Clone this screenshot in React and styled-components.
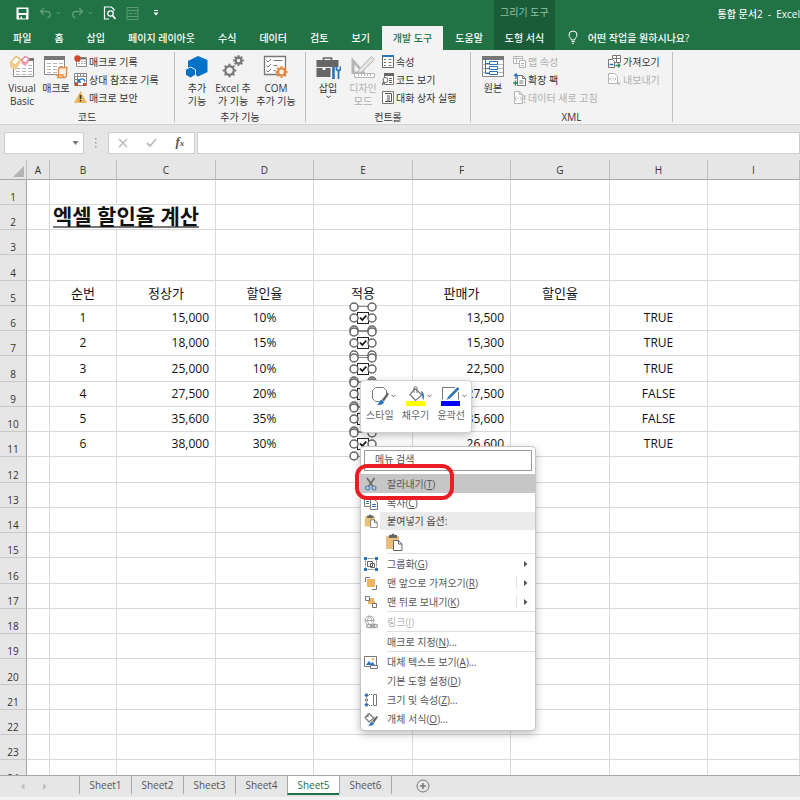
import { useState } from 'react';
import styled, { createGlobalStyle } from 'styled-components';

const GlobalStyle = createGlobalStyle`
  * {
    box-sizing: border-box;
  }
  body {
    margin: 0;
    font-family: 'Open Sans', 'Noto Sans CJK KR', sans-serif;
    font-size: 10px;
    color: #333;
  }
  button,
  input {
    font: inherit;
    color: inherit;
    padding: 0;
    border: none;
    background: none;
  }
  svg {
    display: block;
    flex: none;
  }
`;

const AppWrap = styled.div`
  display: flex;
  flex-direction: column;
  height: 100vh;
  overflow: hidden;
  background-color: #e6e6e6;
`;

/* ---------- header ---------- */

const Header = styled.header`
  display: flex;
  height: 50px;
  color: #fff;
  background-color: #217346;
`;

const HeaderColumn = styled.div`
  display: flex;
  flex: ${({ $grow }) => ($grow ? '1 1 0' : 'none')};
  flex-direction: column;
  min-width: 0;
`;

const QuickBar = styled.div`
  display: flex;
  align-items: center;
  height: 26px;
  padding-left: 16px;
`;

const QuickBtn = styled.button`
  display: flex;
  align-items: center;
  gap: 4px;
  margin-right: ${({ $gap }) => $gap || 10}px;
  color: ${({ $dim }) => ($dim ? '#5b9a78' : '#fff')};
`;

const TabList = styled.nav`
  display: flex;
  gap: 1px;
  height: 24px;
  padding-left: 2px;
`;

const RibbonTab = styled.button`
  height: 24px;
  padding: 0 11px;
  line-height: 22px;
  white-space: nowrap;
  font-weight: 500;
  color: ${({ $active }) => ($active ? '#217346' : '#fff')};
  background-color: ${({ $active }) => ($active ? '#f3f3f3' : 'transparent')};
`;

const ContextGroup = styled.div`
  flex: none;
  width: 61px;
  text-align: center;
  background-color: #1b5c38;
`;

const ContextTitle = styled.p`
  height: 26px;
  margin: 0;
  line-height: 24px;
  color: #8fc4a5;
`;

const DocTitle = styled.h1`
  height: 26px;
  margin: 0 0 0 auto;
  font-size: 10px;
  font-weight: 500;
  line-height: 28px;
  white-space: pre;
`;

const TellMe = styled.button`
  display: flex;
  align-items: center;
  gap: 8px;
  height: 24px;
  padding: 0 0 2px 11px;
  font-weight: 500;
  white-space: nowrap;
`;

/* ---------- ribbon ---------- */

const Ribbon = styled.div`
  display: flex;
  flex: none;
  height: 75px;
  padding-top: 2px;
  overflow: hidden;
  background-color: #f3f3f3;
  border-bottom: 1px solid #d2d2d2;
`;

const Group = styled.section`
  display: flex;
  flex: none;
  flex-direction: column;
  width: ${({ $width }) => $width}px;
  height: 70px;
  border-right: 1px solid #c0c0c0;
`;

const GroupBody = styled.div`
  display: flex;
  flex: none;
  height: 57px;
  padding-left: 4px;
`;

const GroupLabel = styled.p`
  margin: 0;
  line-height: 16px;
  text-align: center;
`;

const BigBtn = styled.button`
  display: flex;
  flex: none;
  flex-direction: column;
  align-items: center;
  width: ${({ $width }) => $width}px;
  padding-top: 3px;
  line-height: 13px;
  white-space: nowrap;
  color: ${({ $dim }) => ($dim ? '#b0b0b0' : '#333')};
`;

const BigText = styled.span`
  display: flex;
  flex-direction: column;
  margin-top: 1px;
`;

const SmallList = styled.div`
  display: flex;
  flex: none;
  flex-direction: column;
  width: ${({ $width }) => $width || 92}px;
  padding-left: 2px;
`;

const SmallBtn = styled.button`
  display: flex;
  align-items: center;
  gap: 2px;
  height: 18px;
  white-space: nowrap;
  color: ${({ $dim }) => ($dim ? '#b0b0b0' : '#333')};
`;

/* ---------- formula bar ---------- */

const FormulaBar = styled.div`
  display: flex;
  flex: none;
  align-items: center;
  height: 35px;
  padding: 0 0 0 4px;
`;

const NameBox = styled.label`
  display: flex;
  align-items: center;
  width: 80px;
  height: 22px;
  padding-right: 4px;
  background-color: #fff;
  border: 1px solid #cdcdcd;
`;

const NameInput = styled.input`
  flex: 1;
  min-width: 0;
  padding-left: 4px;
  outline: none;
`;

const DotHandle = styled.span`
  display: flex;
  justify-content: center;
  width: 24px;
`;

const FxBox = styled.div`
  display: flex;
  align-items: center;
  justify-content: space-around;
  width: 87px;
  height: 22px;
  margin-right: 2px;
  background-color: #fff;
  border: 1px solid #cdcdcd;
`;

const FxBtn = styled.button`
  width: 20px;
  display: flex;
  justify-content: center;
`;

const FxText = styled.span`
  font-family: 'Liberation Serif', serif;
  font-size: 13px;
  font-style: italic;
  font-weight: 700;
  line-height: 14px;
  color: #555;

  small {
    font-size: 9px;
  }
`;

const FormulaInput = styled.input`
  flex: 1;
  min-width: 0;
  height: 22px;
  padding: 0 6px;
  background-color: #fff;
  border: 1px solid #cdcdcd;
  outline: none;
`;

/* ---------- sheet ---------- */

const SheetArea = styled.main`
  position: relative;
  flex: 1;
  min-height: 0;
  overflow: hidden;
  background-color: #fff;
`;

const Grid = styled.table`
  width: 100%;
  min-width: 760px;
  table-layout: fixed;
  border-collapse: separate;
  border-spacing: 0;
  font-size: 12px;
  color: #111;

  th,
  td {
    padding: 0;
    font-weight: 400;
    line-height: 14px;
    white-space: nowrap;
  }
  tbody tr {
    height: 25px;
  }
  tbody tr:nth-child(4n) {
    height: 26px;
  }
`;

const ColHead = styled.th`
  height: 20px;
  font-size: 10px;
  color: #333;
  background-color: #e6e6e6;
  border-right: 1px solid #bdbdbd;
  border-bottom: 1px solid #a6a6a6;
`;

const Corner = styled(ColHead)`
  svg {
    margin: 3px 2px 0 auto;
  }
`;

const RowHead = styled.th`
  font-size: 10px;
  color: #333;
  vertical-align: bottom;
  background-color: #e6e6e6;
  border-right: 1px solid #a6a6a6;
  border-bottom: 1px solid #c8c8c8;
`;

const Cell = styled.td`
  text-align: ${({ $align }) => $align || 'center'};
  vertical-align: middle;
  border-right: 1px solid #d9d9d9;
  border-bottom: 1px solid #d9d9d9;

  && {
    padding-right: ${({ $align }) => ($align === 'right' ? '6px' : '0')};
    font-size: ${({ $head }) => ($head ? '13px' : '12px')};
  }
`;

const TitleCell = styled(Cell)`
  && {
    padding-left: 3px;
    font-size: 21px;
    font-weight: 700;
    line-height: 20px;
    text-align: left;
  }
`;

const TitleText = styled.span`
  display: inline-block;
  height: 22px;
  border-bottom: 2px solid #777;
`;

const CheckWrap = styled.span`
  position: relative;
  display: block;
  width: 12px;
  height: 12px;
  margin: 0 auto;
`;

const CheckInput = styled.input`
  display: block;
  width: 12px;
  height: 12px;
  margin: 0;
  appearance: none;
  background-color: #fff;
  border: 1px solid #222;
`;

const Handles = styled.svg`
  position: absolute;
  top: -10px;
  left: -8px;
  pointer-events: none;
`;

/* ---------- popups over the sheet ---------- */

const MiniToolbar = styled.div`
  position: absolute;
  top: 220px;
  left: 360px;
  display: flex;
  justify-content: space-around;
  width: 112px;
  height: 53px;
  padding: 5px 2px 0 1px;
  background-color: #fff;
  border: 1px solid #d0d0d0;
  border-radius: 4px;
  box-shadow: 0 3px 8px rgba(0, 0, 0, 0.25);
`;

const MiniBtn = styled.button`
  display: flex;
  flex-direction: column;
  align-items: center;
  width: 36px;
  line-height: 14px;
  white-space: nowrap;
  color: #666;
`;

const MiniIcon = styled.span`
  display: flex;
  align-items: center;
  gap: 1px;
  margin-bottom: 2px;
  padding-left: 6px;
`;

const Menu = styled.div`
  position: absolute;
  top: 286px;
  left: 360px;
  width: 176px;
  padding: 3px 0 2px;
  color: #555;
  background-color: #fff;
  border: 1px solid #c6c6c6;
  border-radius: 4px;
  box-shadow: 0 3px 8px rgba(0, 0, 0, 0.25);
`;

const MenuSearch = styled.input`
  display: block;
  width: calc(100% - 6px);
  height: 21px;
  margin: 0 3px 3px;
  padding: 0 0 4px 10px;
  border: 1px solid #999;
  outline: none;

  &::placeholder {
    color: #555;
    opacity: 1;
  }
`;

const MenuItem = styled.button`
  display: flex;
  align-items: center;
  width: 100%;
  height: 19px;
  padding: 0 7px 0 3px;
  text-align: left;
  white-space: nowrap;
  color: ${({ $dim }) => ($dim ? '#b5b5b5' : '#555')};
  background-color: ${({ $active }) => ($active ? '#c6c6c6' : 'transparent')};
`;

const MenuIcon = styled.span`
  width: 14px;
  margin-right: 9px;
`;

const MenuText = styled.span`
  flex: 1;
`;

const SubArrow = styled.span`
  display: flex;
  align-items: center;
  justify-content: flex-end;
  width: 12px;
  height: 13px;
  border-left: 1px solid ${({ $split }) => ($split ? '#e3e3e3' : 'transparent')};
`;

const PasteHead = styled.div`
  display: flex;
  align-items: center;
  height: 18px;
  padding-left: 3px;
`;

const PasteLabel = styled.span`
  flex: 1;
  margin-left: 2px;
  padding-left: 7px;
  line-height: 18px;
  color: #444;
  background-color: #ebebeb;
`;

const PasteBtn = styled.button`
  display: block;
  height: 23px;
  padding: 0 0 0 24px;
`;

const MenuLine = styled.hr`
  height: 1px;
  margin: 0 0 0 26px;
  border: none;
  background-color: #dedede;
`;

const RedMark = styled.div`
  position: absolute;
  top: 304px;
  left: 355px;
  width: 99px;
  height: 36px;
  border: 4px solid #ec1c24;
  border-radius: 12px;
  pointer-events: none;
`;

/* ---------- sheet tabs ---------- */

const SheetBar = styled.footer`
  display: flex;
  flex: none;
  height: 25px;
  padding-left: 20px;
  border-top: 1px solid #a6a6a6;
  border-bottom: 3px solid #f3f3f3;
`;

const NavBtn = styled.button`
  display: flex;
  align-items: center;
  width: 22px;
  height: 20px;
`;

const SheetTabs = styled.div`
  display: flex;
  margin-left: 15px;
`;

const SheetTab = styled.button`
  width: 52px;
  height: 19px;
  line-height: 18px;
  color: ${({ $active }) => ($active ? '#217346' : '#555')};
  background-color: ${({ $active }) => ($active ? '#fff' : 'transparent')};
  border-left: 1px solid #a6a6a6;
  border-bottom: 2px solid ${({ $active }) => ($active ? '#217346' : 'transparent')};

  &:last-child {
    width: 53px;
    border-right: 1px solid #a6a6a6;
  }
`;

const AddSheetBtn = styled.button`
  height: 20px;
  margin-left: 24px;
`;

/* ---------- icons ---------- */

const Chevron = ({ color = 'currentColor' }) => (
  <svg width="5" height="4" viewBox="0 0 5 4" fill="none" stroke={color}>
    <path d="M0.5 0.8 2.5 2.8 4.5 0.8" />
  </svg>
);

const SaveIcon = () => (
  <svg width="13" height="13" viewBox="0 0 13 13">
    <path fill="#fff" fillRule="evenodd" d="M.5.500h12v12H.5zM2.500 2v4h8V2zM3 8v3.500h1.500V9.500h1.500v2h4V8z" />
  </svg>
);

const UndoIcon = ({ flip }) => (
  <svg width="13" height="12" viewBox="0 0 13 12" fill="none" stroke="currentColor" strokeWidth="1.4">
    <g transform={flip ? 'translate(13 0) scale(-1 1)' : undefined}>
      <path d="M5 1 1.500 4.500 5 8M1.500 4.500H8c4 0 4.500 5 .5 6.500" />
    </g>
  </svg>
);

const PreviewIcon = () => (
  <svg width="13" height="14" viewBox="0 0 13 14" fill="none" stroke="#fff" strokeWidth="1.200">
    <path d="M11 5V3.500L8.500 1H1.500v12H6" />
    <circle cx="7.500" cy="7.500" r="2.700" />
    <path d="m9.500 9.500 3 3.500" strokeWidth="1.800" />
  </svg>
);

const FormIcon = () => (
  <svg width="13" height="13" viewBox="0 0 13 13" fill="none" stroke="currentColor">
    <path d="M1 .5h11v12H1zM1 3.500h11M1 9.500h11M3 6.500h3M7.500 6.500h3" />
  </svg>
);

const CustomizeIcon = () => (
  <svg width="6" height="6" viewBox="0 0 6 6">
    <path fill="#fff" d="M1 0h4v1H1zM0.500 2.500h5L3 5.500z" />
  </svg>
);

const BulbIcon = () => (
  <svg width="14" height="14" viewBox="0 0 14 14" fill="none" stroke="#fff">
    <path d="M5.300 10c0-2-2.300-2.600-2.300-5a4 4 0 0 1 8 0c0 2.400-2.300 3-2.300 5zM5.300 11.500h3.400M6 13.200h2" />
  </svg>
);

const VbIcon = () => (
  <svg width="26" height="26" viewBox="0 0 26 26">
    <path fill="#fff" stroke="#8a8a8a" d="M4.500 4.500h20v17h-20z" />
    <path fill="#777" d="M17 3h8v3h-8z" />
    <path stroke="#b5b5b5" fill="none" d="M7 13.500h4M13 13.500h4M19 13.500h4M7 16.500h4M13 16.500h4M19 16.500h4M7 19.500h4M13 19.500h4M19 19.500h4M19 10.500h4" />
    <path fill="#fff" stroke="#e8c070" strokeWidth="1.500" d="m1.500 7.500 5.500-6L11.500 4 6.500 10.500z" />
    <path fill="#f0cd90" d="m1 7.500 5.500 3V15L1 12zM6.500 10.500l5-6.500v4l-5 7z" />
    <path fill="#fff" stroke="#e5829c" strokeWidth="1.200" d="m12.500 5.500 3.500-4 4 2-3.500 4.500z" />
    <path fill="#ef9ab0" d="m12.500 5.500 4 2.500v3l-4-2.500zM16.500 8 20 3.500v3L16.500 11z" />
  </svg>
);

const MacroIcon = () => (
  <svg width="26" height="26" viewBox="0 0 26 26">
    <path fill="#fff" stroke="#8a8a8a" d="M1.500 2.500h20v17h-20z" />
    <path fill="#777" d="M1 1h21v4H1z" />
    <path stroke="#b5b5b5" fill="none" d="M4 8.500h4M10 8.500h4M16 8.500h4M4 11.500h4M10 11.500h4M16 11.500h4M4 14.500h4M10 14.500h4M4 17.500h4M10 17.500h4" />
    <path fill="#fdf1e6" stroke="#e8893c" strokeWidth="1.300" d="M17 12.500h7.500c-1 .5-1 1.500-1 2.500v5c0 2-1 2.500-2 2.500h-7.500c1 0 1.500-.5 1.500-2.500v-5c0-1.500.5-2.500 1.500-2.500zM13 20h7c0 2 .5 2.500 1.500 2.500" />
  </svg>
);

const AddInIcon = () => (
  <svg width="26" height="26" viewBox="0 0 26 26">
    <path fill="#0072c6" d="m14 1 9.500 4v12L14 21.500 10 19v-4l-6-2V6z" />
    <path fill="#0072c6" stroke="#f3f3f3" d="m6.500 12 5 2.500V20l-5 3-5-3v-5.500z" />
  </svg>
);

const Gear = ({ cx, cy, r, color, fill = 'none' }) => (
  <g fill={fill} stroke={color} transform={`translate(${cx} ${cy})`}>
    <circle r={r} strokeWidth="2.200" />
    {[0, 45, 90, 135, 180, 225, 270, 315].map((deg) => (
      <path key={deg} strokeWidth="2" d={`M0 ${-r - 0.5}v-2`} transform={`rotate(${deg})`} />
    ))}
  </g>
);

const GearsIcon = () => (
  <svg width="26" height="26" viewBox="0 0 26 26">
    <Gear cx={9.5} cy={15.5} r={4.3} color="#777" />
    <Gear cx={18.5} cy={5.500} r={2.8} color="#777" />
  </svg>
);

const ComIcon = () => (
  <svg width="26" height="26" viewBox="0 0 26 26">
    <path fill="#fff" stroke="#777" strokeWidth="1.300" d="M1.500 1.500h21v18h-21z" />
    <path fill="none" stroke="#777" d="m3.500 5.500 1.500 1.500L8 4M3.500 10.500 5 12l3-3M3.500 15.500 5 17l3-3M10.500 5.500h9M10.500 10.500h4M10.500 15.500h2" />
    <Gear cx={18.500} cy={17} r={3.500} color="#e8893c" fill="#f3f3f3" />
  </svg>
);

const ToolboxIcon = () => (
  <svg width="26" height="26" viewBox="0 0 26 26">
    <path fill="none" stroke="#666" strokeWidth="1.600" d="M8.500 5.500V3h8v2.500" />
    <path fill="#666" d="M1.500 5h22v7h-22zM1.500 13h6v2h3v-2h5v9h-14z" />
    <path stroke="#2b74b8" strokeWidth="2.600" d="M18.500 12v12" />
    <path fill="none" stroke="#2b74b8" strokeWidth="1.800" d="M21.500 11.500v3l2 1.500 2-1.500v-3M23.500 16v8" />
  </svg>
);

const DesignIcon = () => (
  <svg width="26" height="26" viewBox="0 0 26 26">
    <path fill="#b5b5b5" fillRule="evenodd" d="M1.500 2v17h15zM4.500 9.500l7 7h-7z" />
    <path fill="#e3e3e3" stroke="#b5b5b5" d="M21.500 1.500 24.500 4.500 12 17l-4 1.500 1-4z" />
    <path fill="#fff" stroke="#b5b5b5" d="M4.500 18.500h20v4h-20zM8.500 19v2M11.500 19v2M14.500 19v2M17.500 19v2M20.500 19v2" />
  </svg>
);

const SourceIcon = () => (
  <svg width="26" height="26" viewBox="0 0 26 26">
    <path fill="#fff" stroke="#888" d="M2.500 3.500h21v18h-21z" />
    <path fill="#777" d="M2 1h22v4H2z" />
    <path fill="none" stroke="#bbb" d="M3 9.500h20M3 13.500h20M3 17.500h20" />
    <path fill="none" stroke="#2b74b8" d="M5.500 3v15.500h4M5.500 13.500h4M5.500 8.500h4" />
    <path fill="#fff" stroke="#2b74b8" d="M9.500 6.500h8v3h-8zM9.500 11.500h8v3h-8zM9.500 16.500h8v3h-8z" />
  </svg>
);

const RecordIcon = () => (
  <svg width="13" height="13" viewBox="0 0 13 13">
    <path fill="#fff" stroke="#8a8a8a" d="M2.500 2.500h10v9h-10z" />
    <path stroke="#777" d="M5 3.500h7" strokeWidth="2" />
    <path stroke="#a8a8a8" d="M4 6.500h2M7 6.500h2M10 6.500h2M4 8.500h2M7 8.500h2M10 8.500h2" />
    <circle cx="3.500" cy="3.500" r="3.200" fill="#d2492a" />
  </svg>
);

const RelativeIcon = () => (
  <svg width="13" height="13" viewBox="0 0 13 13">
    <path fill="#fff" stroke="#888" d="M.5.500h12v12H.5zM.5 3.500h12M3.500.500v12M6.500.500v3M9.500.500v3M.5 6.500h3M.5 9.500h3" />
    <path fill="none" stroke="#2b74b8" strokeWidth="1.400" d="M5 8.500c1-3.500 5-3.500 6 0M4.500 6v3H7" />
    <path fill="#d2492a" d="M1 10h3v3H1zM9 10h3v3H9z" />
  </svg>
);

const WarnIcon = () => (
  <svg width="13" height="12" viewBox="0 0 13 12">
    <path fill="#e9b860" d="M6.500 0 13 12H0z" />
    <path stroke="#333" strokeWidth="1.600" d="M6.500 4v4M6.500 9v1.600" />
  </svg>
);

const PropIcon = () => (
  <svg width="12" height="13" viewBox="0 0 12 13">
    <path fill="#fff" stroke="#666" d="M.5.500h11v12H.5z" />
    <path fill="#2b74b8" d="M0 0h12v2H0z" />
    <path stroke="#777" d="M2 4.500h2M6.500 4.500h3M2 7.500h2M6.500 7.500h3M2 10.500h2M6.500 10.500h3" />
  </svg>
);

const CodeIcon = () => (
  <svg width="12" height="13" viewBox="0 0 12 13">
    <path fill="#fff" stroke="#777" d="M2.500 1.500h9v10h-9z" />
    <path fill="#666" d="M2 0h10v3H2zM7 5h3v1H7zM7 7h3v1H7zM7 9h3v1H7z" />
    <circle cx="3.500" cy="7" r="2.500" fill="#fff" stroke="#666" />
    <path stroke="#666" strokeWidth="1.500" d="m2 9-2 3" />
  </svg>
);

const DialogIcon = () => (
  <svg width="12" height="13" viewBox="0 0 12 13">
    <path fill="#fff" stroke="#777" d="M.5.500h11v12H.5z" />
    <path fill="none" stroke="#555" d="M3 2.500h6.500v8H3M5 5h3M5 7h3M4.500 9h3.500" />
  </svg>
);

const MapIcon = ({ color = '#b5b5b5' }) => (
  <svg width="13" height="13" viewBox="0 0 13 13" fill="#fff" stroke={color}>
    <path d="M.5 1.500h9v7h-9zM.5 3.500h9M3.500 1.500v7" />
    <path d="M6.500 5.500h6v7h-6zM8 8.500h3M8 10.500h3" />
  </svg>
);

const PackIcon = () => (
  <svg width="13" height="13" viewBox="0 0 13 13" fill="none" stroke="#777">
    <path fill="#fff" d="M4.500 2.500h5l3 3v7h-8zM9.500 2.500v3h3M6.500 8h4M6.500 10h4" />
    <path stroke="#2b74b8" strokeWidth="1.300" d="M3 6V1M1 3l2-2 2 2" />
    <path stroke="#2f8f63" strokeWidth="1.400" d="M2.500 7.500v5M0 10h5" />
  </svg>
);

const XmlIcon = () => (
  <svg width="13" height="13" viewBox="0 0 13 13" fill="#fff" stroke="#b5b5b5">
    <path d="M1.500.500h5l3 3v9h-8zM6.500.500v3h3M3.500 5.500 2 7.500l1.500 2M7 5.500l1.500 2L7 9.500M4.500 7.500h1.500" />
    <path strokeWidth="1.500" d="M11.500 4v5M11.500 10.500v1.500" />
  </svg>
);

const ImportIcon = () => (
  <svg width="13" height="13" viewBox="0 0 13 13" fill="#fff" stroke="#777">
    <path d="M4.500.500h8v7h-8zM4.500 3.500h8M8.500.500v7" />
    <path d="M.5 4.500h4l2 2v6h-6z" />
    <path stroke="#2b74b8" d="M1.500 9.500h4" strokeWidth="1.500" />
    <path stroke="#2f8f63" strokeWidth="1.300" fill="none" d="M7.500 10.500h4M10 8.500l2 2-2 2" />
  </svg>
);

const ExportIcon = () => (
  <svg width="13" height="13" viewBox="0 0 13 13" fill="#fff" stroke="#b5b5b5">
    <path d="M.5.500h6l3 3v7h-9zM3 4.500 1.500 6 3 7.500M6.500 4.500 8 6 6.500 7.500M4 6h1.500" />
    <path d="M6.500 10.500h5M10 8.500l2 2-2 2" />
  </svg>
);

const StyleIcon = () => (
  <svg width="20" height="20" viewBox="0 0 20 20">
    <path fill="#fff" stroke="#777" d="M9 15.500H5.500l-3-3v-8l3-3h8l3 3V9" />
    <path fill="#666" d="m17.500 6.500 1.500 1.500-5 7.500-2-2z" />
    <path fill="#2b74b8" d="M11.500 13.500 14 16c-1 3-4 3-7 3 2-1 2-4.500 4.500-5.500z" />
  </svg>
);

const FillIcon = () => (
  <svg width="20" height="20" viewBox="0 0 20 20">
    <path fill="#fff" stroke="#777" strokeWidth="1.200" d="m9 2.500 7 6.500-6.500 5.500L4 8.500z" />
    <path fill="none" stroke="#777" d="M8 7V2c0-2 3-2 3 0v5" />
    <path fill="#2b74b8" d="M15 5c3 1 3.500 5 2.500 9-1.500-1-1-4-1.500-5z" />
    <path fill="#ff0" d="M0 15h19v5H0z" />
  </svg>
);

const OutlineIcon = () => (
  <svg width="20" height="20" viewBox="0 0 20 20">
    <path fill="none" stroke="#777" d="M14 1.500H1.500v12M17.500 6v7.500" />
    <path stroke="#2b74b8" strokeWidth="2.500" d="m17.500 2-9 9" />
    <path fill="#2b74b8" d="m7.500 10 2 2-4 2z" />
    <path fill="#00f" d="M0 15h19v5H0z" />
  </svg>
);

const CutIcon = () => (
  <svg width="14" height="14" viewBox="0 0 14 14" fill="none">
    <path stroke="#666" strokeWidth="1.500" d="M3 1l6 8.500M10.500 1l-6 8.500" />
    <circle cx="3.500" cy="11" r="2" stroke="#4a86c0" strokeWidth="1.200" />
    <circle cx="10" cy="11" r="2" stroke="#4a86c0" strokeWidth="1.200" />
  </svg>
);

const CopyIcon = () => (
  <svg width="14" height="14" viewBox="0 0 14 14" fill="#fff" stroke="#777">
    <path d="M.5 1.500h4l2 2v7h-6z" />
    <path d="M6.500 3.500h4l3 3v7h-7z" />
    <path stroke="#2b74b8" d="M2 5.500h3M2 7.500h3M8 8.500h4M8 10.500h4" />
  </svg>
);

const PasteIcon = ({ size = 14 }) => (
  <svg width={size} height={size} viewBox="0 0 18 18">
    <path fill="#eabf7c" d="M1 3h13v13H1z" />
    <path fill="#666" d="M4 2h2.500a1.500 1.500 0 0 1 3 0H12v3H4z" />
    <path fill="#fff" stroke="#666" d="M8.500 7.500h5l3.500 3.500v6.500H8.500zM13.500 7.500V11H17" />
  </svg>
);

const GroupIcon = () => (
  <svg width="14" height="14" viewBox="0 0 14 14">
    <path fill="none" stroke="#777" d="M3.500 1.500h7M3.500 12.500h7M1.500 3.500v7M12.500 3.500v7" strokeDasharray="2 1" />
    <path fill="none" stroke="#666" d="M3.500 4.500h5v5h-5zM6.500 6.500h4v4h-4z" />
    <path fill="#2b74b8" d="M0 0h3v3H0zM11 0h3v3h-3zM0 11h3v3H0zM11 11h3v3h-3z" />
  </svg>
);

const FrontIcon = () => (
  <svg width="14" height="14" viewBox="0 0 14 14">
    <path fill="none" stroke="#777" d="M6 1.500H1.500V6M12.500 9v4.500H8" />
    <path fill="#eab464" d="M3 3h8v8H3z" />
  </svg>
);

const BackIcon = () => (
  <svg width="14" height="14" viewBox="0 0 14 14">
    <path fill="#eab464" d="M4 3h6v3H4zM4 6h7v3H4z" />
    <path fill="#fff" stroke="#777" d="M1.500 1.500h4v4h-4zM8.500 8.500h4v4h-4z" />
  </svg>
);

const LinkIcon = () => (
  <svg width="14" height="14" viewBox="0 0 14 14" fill="none" stroke="#a5a5a5">
    <circle cx="5.500" cy="5.500" r="4.500" />
    <path d="M1 5.500h9M5.500 1c-2.500 2.500-2.500 6.500 0 9M5.500 1C8 3.500 8 6 7.500 7" />
    <path fill="#fff" strokeWidth="1.300" d="M4 9.500h3.500v3H4a1.500 1.500 0 0 1 0-3zM9 9.500h3a1.500 1.500 0 0 1 0 3H9zM6 11h5" />
  </svg>
);

const AltTextIcon = () => (
  <svg width="14" height="14" viewBox="0 0 14 14">
    <path fill="#fff" stroke="#777" d="M.5 1.500h12v10H.5z" />
    <path fill="#2b74b8" d="m2 10 3-4 2 2.500 1.500-1.500L11 10z" />
    <circle cx="9" cy="4" r="1.200" fill="#eab464" />
    <path fill="#fff" stroke="#777" d="M6.500 10.500h7v3h-7z" />
  </svg>
);

const SizeIcon = () => (
  <svg width="14" height="14" viewBox="0 0 14 14" fill="none">
    <path stroke="#2b74b8" strokeWidth="1.400" d="M2.500 1v3.500M.8 3 2.500 1l1.700 2M2.500 13V9.500M.8 11l1.700 2 1.700-2" />
    <path stroke="#777" d="M1.500 6h2v2h-2zM9.500 1.500h3v11h-3z" />
    <path stroke="#777" strokeDasharray="1 1" d="M5 1.500h4M5 12.500h4" />
  </svg>
);

const FormatIcon = () => (
  <svg width="14" height="14" viewBox="0 0 14 14">
    <path fill="#fff" stroke="#777" strokeWidth="1.200" d="m5 1.500 5 4.500-5 4-4-4.500zM4 5V1.500" />
    <path fill="#666" d="m12.500 4 1.500 1-4 6-2-1.500z" />
    <path fill="#2b74b8" d="m7.500 9.500 2.500 2c-1 2-3 2.500-6 2 2-.5 2-3 3.500-4z" />
  </svg>
);

/* ---------- data ---------- */

const tabs = ['파일', '홈', '삽입', '페이지 레이아웃', '수식', '데이터', '검토', '보기', '개발 도구', '도움말'];

const columns = [
  { name: 'A', width: 23 },
  { name: 'B', width: 67 },
  { name: 'C', width: 99 },
  { name: 'D', width: 98 },
  { name: 'E', width: 99 },
  { name: 'F', width: 98 },
  { name: 'G', width: 99 },
  { name: 'H', width: 98 },
  { name: 'I' }
];

const ROW_COUNT = 24;

const products = [
  { price: '15,000', rate: '10%', sale: '13,500', applied: true },
  { price: '18,000', rate: '15%', sale: '15,300', applied: true },
  { price: '25,000', rate: '10%', sale: '22,500', applied: true },
  { price: '27,500', rate: '20%', sale: '27,500', applied: false },
  { price: '35,600', rate: '35%', sale: '35,600', applied: false },
  { price: '38,000', rate: '30%', sale: '26,600', applied: true }
];

const menuItems = [
  { text: '그룹화', code: 'G', icon: <GroupIcon />, sub: true },
  { text: '맨 앞으로 가져오기', code: 'R', icon: <FrontIcon />, sub: true, split: true },
  { text: '맨 뒤로 보내기', code: 'K', icon: <BackIcon />, sub: true, split: true },
  { line: true },
  { text: '링크', code: 'I', icon: <LinkIcon />, dim: true },
  { line: true },
  { text: '매크로 지정', code: 'N', more: true },
  { line: true },
  { text: '대체 텍스트 보기', code: 'A', icon: <AltTextIcon />, more: true },
  { text: '기본 도형 설정', code: 'D' },
  { text: '크기 및 속성', code: 'Z', icon: <SizeIcon />, more: true },
  { text: '개체 서식', code: 'O', icon: <FormatIcon />, more: true }
];

const sheets = ['Sheet1', 'Sheet2', 'Sheet3', 'Sheet4', 'Sheet5', 'Sheet6'];

/* ---------- components ---------- */

function Big({ icon, lines, width, dim, arrow }) {
  return (
    <BigBtn $width={width} $dim={dim} disabled={dim}>
      {icon}
      <BigText>
        {lines.map((line) => (
          <span key={line}>{line}</span>
        ))}
      </BigText>
      {arrow && <Chevron />}
    </BigBtn>
  );
}

function Small({ icon, text, dim }) {
  return (
    <SmallBtn $dim={dim} disabled={dim}>
      {icon}
      {text}
    </SmallBtn>
  );
}

function SelectedCheck({ checked, onChange, label }) {
  const points = [5, 23].flatMap((x) => [5, 16, 28].map((y) => [x, y]));
  return (
    <CheckWrap>
      <CheckInput type="checkbox" checked={checked} onChange={onChange} aria-label={label} />
      <Handles width="28" height="33" viewBox="0 0 28 33" fill="none">
        <path stroke="#8a8a8a" d="M5 4.500h18M5 28.500h18" />
        {checked && <path stroke="#111" strokeWidth="1.800" d="m11 15.500 2.300 2.500 4-4.500" />}
        {points.map(([x, y]) => (
          <circle key={`${x}-${y}`} cx={x} cy={y} r="4" fill="#fff" stroke="#666" strokeWidth="1.500" />
        ))}
      </Handles>
    </CheckWrap>
  );
}

function EmptyCells({ count }) {
  return Array.from({ length: count }, (_, i) => <Cell key={i} />);
}

function RowCells({ row, items, onToggle }) {
  if (row === 2) {
    return (
      <>
        <Cell />
        <TitleCell colSpan={2}>
          <TitleText>엑셀 할인율 계산</TitleText>
        </TitleCell>
        <EmptyCells count={6} />
      </>
    );
  }
  if (row === 5) {
    return (
      <>
        <Cell />
        {['순번', '정상가', '할인율', '적용', '판매가', '할인율'].map((name, i) => (
          <Cell key={i} $head>
            {name}
          </Cell>
        ))}
        <EmptyCells count={2} />
      </>
    );
  }
  const item = items[row - 6];
  if (!item) return <EmptyCells count={9} />;
  return (
    <>
      <Cell />
      <Cell>{row - 5}</Cell>
      <Cell $align="right">{item.price}</Cell>
      <Cell>{item.rate}</Cell>
      <Cell>
        <SelectedCheck checked={item.applied} onChange={() => onToggle(row - 6)} label={`적용 ${row - 5}`} />
      </Cell>
      <Cell $align="right">{item.sale}</Cell>
      <Cell />
      <Cell>{item.applied ? 'TRUE' : 'FALSE'}</Cell>
      <Cell />
    </>
  );
}

function ContextMenu() {
  return (
    <Menu>
      <MenuSearch placeholder="메뉴 검색" aria-label="메뉴 검색" />
      <MenuItem $active>
        <MenuIcon>
          <CutIcon />
        </MenuIcon>
        <MenuText>
          잘라내기(<u>T</u>)
        </MenuText>
      </MenuItem>
      <MenuItem>
        <MenuIcon>
          <CopyIcon />
        </MenuIcon>
        <MenuText>
          복사(<u>C</u>)
        </MenuText>
      </MenuItem>
      <PasteHead>
        <PasteIcon />
        <PasteLabel>붙여넣기 옵션:</PasteLabel>
      </PasteHead>
      <PasteBtn aria-label="붙여넣기">
        <PasteIcon size={18} />
      </PasteBtn>
      <MenuLine />
      {menuItems.map((item, i) =>
        item.line ? (
          <MenuLine key={i} />
        ) : (
          <MenuItem key={i} $dim={item.dim} disabled={item.dim}>
            <MenuIcon>{item.icon}</MenuIcon>
            <MenuText>
              {item.text}(<u>{item.code}</u>){item.more && '...'}
            </MenuText>
            {item.sub && (
              <SubArrow $split={item.split}>
                <svg width="4" height="6" viewBox="0 0 4 6">
                  <path fill="#555" d="M0 0l3.500 3L0 6z" />
                </svg>
              </SubArrow>
            )}
          </MenuItem>
        )
      )}
    </Menu>
  );
}

function App() {
  const [items, setItems] = useState(products);
  const [activeTab, setActiveTab] = useState('개발 도구');
  const [activeSheet, setActiveSheet] = useState('Sheet5');

  const toggleItem = (index) => {
    setItems(items.map((item, i) => (i === index ? { ...item, applied: !item.applied } : item)));
  };

  return (
    <AppWrap>
      <GlobalStyle />
      <Header>
        <HeaderColumn>
          <QuickBar>
            <QuickBtn aria-label="저장">
              <SaveIcon />
            </QuickBtn>
            <QuickBtn $dim aria-label="실행 취소">
              <UndoIcon />
              <Chevron />
            </QuickBtn>
            <QuickBtn $dim aria-label="다시 실행">
              <UndoIcon flip />
              <Chevron />
            </QuickBtn>
            <QuickBtn aria-label="인쇄 미리 보기">
              <PreviewIcon />
            </QuickBtn>
            <QuickBtn $dim $gap={14} aria-label="양식">
              <FormIcon />
            </QuickBtn>
            <QuickBtn aria-label="빠른 실행 도구 모음 사용자 지정">
              <CustomizeIcon />
            </QuickBtn>
          </QuickBar>
          <TabList>
            {tabs.map((tab) => (
              <RibbonTab key={tab} $active={tab === activeTab} onClick={() => setActiveTab(tab)}>
                {tab}
              </RibbonTab>
            ))}
          </TabList>
        </HeaderColumn>
        <ContextGroup>
          <ContextTitle>그리기 도구</ContextTitle>
          <RibbonTab>도형 서식</RibbonTab>
        </ContextGroup>
        <HeaderColumn $grow>
          <DocTitle>{'통합 문서2  -  Excel'}</DocTitle>
          <TellMe>
            <BulbIcon />
            어떤 작업을 원하시나요?
          </TellMe>
        </HeaderColumn>
      </Header>

      <Ribbon>
        <Group $width={175}>
          <GroupBody>
            <Big icon={<VbIcon />} lines={['Visual', 'Basic']} width={36} />
            <Big icon={<MacroIcon />} lines={['매크로']} width={32} />
            <SmallList>
              <Small icon={<RecordIcon />} text="매크로 기록" />
              <Small icon={<RelativeIcon />} text="상대 참조로 기록" />
              <Small icon={<WarnIcon />} text="매크로 보안" />
            </SmallList>
          </GroupBody>
          <GroupLabel>코드</GroupLabel>
        </Group>
        <Group $width={131}>
          <GroupBody>
            <Big icon={<AddInIcon />} lines={['추가', '기능']} width={36} />
            <Big icon={<GearsIcon />} lines={['Excel 추', '가 기능']} width={36} />
            <Big icon={<ComIcon />} lines={['COM', '추가 기능']} width={50} />
          </GroupBody>
          <GroupLabel>추가 기능</GroupLabel>
        </Group>
        <Group $width={165}>
          <GroupBody>
            <Big icon={<ToolboxIcon />} lines={['삽입']} width={36} arrow />
            <Big icon={<DesignIcon />} lines={['디자인', '모드']} width={34} dim />
            <SmallList>
              <Small icon={<PropIcon />} text="속성" />
              <Small icon={<CodeIcon />} text="코드 보기" />
              <Small icon={<DialogIcon />} text="대화 상자 실행" />
            </SmallList>
          </GroupBody>
          <GroupLabel>컨트롤</GroupLabel>
        </Group>
        <Group $width={202}>
          <GroupBody>
            <Big icon={<SourceIcon />} lines={['원본']} width={36} />
            <SmallList $width={95}>
              <Small icon={<MapIcon />} text="맵 속성" dim />
              <Small icon={<PackIcon />} text="확장 팩" />
              <Small icon={<XmlIcon />} text="데이터 새로 고침" dim />
            </SmallList>
            <SmallList $width={60}>
              <Small icon={<ImportIcon />} text="가져오기" />
              <Small icon={<ExportIcon />} text="내보내기" dim />
            </SmallList>
          </GroupBody>
          <GroupLabel>XML</GroupLabel>
        </Group>
      </Ribbon>

      <FormulaBar>
        <NameBox>
          <NameInput aria-label="이름 상자" />
          <svg width="7" height="4" viewBox="0 0 7 4">
            <path fill="#777" d="M0.500 0h6l-3 4z" />
          </svg>
        </NameBox>
        <DotHandle>
          <svg width="2" height="10" viewBox="0 0 2 10">
            <path fill="#999" d="M0 0h1.500v1.500H0zM0 4h1.500v1.500H0zM0 8h1.500v1.500H0z" />
          </svg>
        </DotHandle>
        <FxBox>
          <FxBtn aria-label="취소">
            <svg width="10" height="10" viewBox="0 0 10 10" stroke="#bbb" strokeWidth="1.500">
              <path d="m1 1 8 8M9 1 1 9" />
            </svg>
          </FxBtn>
          <FxBtn aria-label="입력">
            <svg width="11" height="9" viewBox="0 0 11 9" fill="none" stroke="#bbb" strokeWidth="1.800">
              <path d="m1 5 3 3 6-7" />
            </svg>
          </FxBtn>
          <FxBtn aria-label="함수 삽입">
            <FxText>
              f<small>x</small>
            </FxText>
          </FxBtn>
        </FxBox>
        <FormulaInput aria-label="수식 입력줄" />
      </FormulaBar>

      <SheetArea>
        <Grid>
          <colgroup>
            <col width={27} />
            {columns.map((col) => (
              <col key={col.name} width={col.width} />
            ))}
          </colgroup>
          <thead>
            <tr>
              <Corner>
                <svg width="11" height="11" viewBox="0 0 11 11">
                  <path fill="#b5b5b5" d="M11 0v11H0z" />
                </svg>
              </Corner>
              {columns.map((col) => (
                <ColHead key={col.name}>{col.name}</ColHead>
              ))}
            </tr>
          </thead>
          <tbody>
            {Array.from({ length: ROW_COUNT }, (_, i) => i + 1).map((row) => (
              <tr key={row}>
                <RowHead>{row}</RowHead>
                <RowCells row={row} items={items} onToggle={toggleItem} />
              </tr>
            ))}
          </tbody>
        </Grid>

        <MiniToolbar>
          <MiniBtn>
            <MiniIcon>
              <StyleIcon />
              <Chevron />
            </MiniIcon>
            스타일
          </MiniBtn>
          <MiniBtn>
            <MiniIcon>
              <FillIcon />
              <Chevron />
            </MiniIcon>
            채우기
          </MiniBtn>
          <MiniBtn>
            <MiniIcon>
              <OutlineIcon />
              <Chevron />
            </MiniIcon>
            윤곽선
          </MiniBtn>
        </MiniToolbar>
        <ContextMenu />
        <RedMark />
      </SheetArea>

      <SheetBar>
        <NavBtn aria-label="이전 시트">
          <svg width="5" height="7" viewBox="0 0 5 7">
            <path fill="#c0c0c0" d="M4.500 0v7L1 3.500z" />
          </svg>
        </NavBtn>
        <NavBtn aria-label="다음 시트">
          <svg width="5" height="7" viewBox="0 0 5 7">
            <path fill="#c0c0c0" d="M1 0v7l3.500-3.500z" />
          </svg>
        </NavBtn>
        <SheetTabs>
          {sheets.map((sheet) => (
            <SheetTab key={sheet} $active={sheet === activeSheet} onClick={() => setActiveSheet(sheet)}>
              {sheet}
            </SheetTab>
          ))}
        </SheetTabs>
        <AddSheetBtn aria-label="새 시트">
          <svg width="14" height="14" viewBox="0 0 14 14" fill="none" stroke="#777">
            <circle cx="7" cy="7" r="6" />
            <path strokeWidth="1.500" d="M7 4v6M4 7h6" />
          </svg>
        </AddSheetBtn>
      </SheetBar>
    </AppWrap>
  );
}

export default App;
